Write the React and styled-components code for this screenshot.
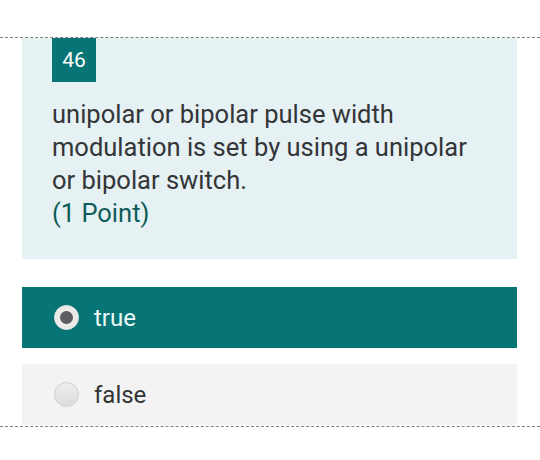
import React from 'react';
import styled, { createGlobalStyle } from 'styled-components';

const GlobalStyle = createGlobalStyle`
  body {
    margin: 0;
    background: #ffffff;
    font-family: Roboto, "Liberation Sans", sans-serif;
  }
`;

const Page = styled.div`
  width: 540px;
  height: 460px;
  padding-top: 37px;
  box-sizing: border-box;
`;

const Sheet = styled.div`
  border-top: 1px dashed #7d7d7d;
  border-bottom: 1px dashed #7d7d7d;
  padding: 0 23px 1px 22px;
  display: flex;
  flex-direction: column;
`;

const QuestionCard = styled.div`
  background: #e6f1f3;
  height: 221px;
  padding: 0 30px 0 30px;
  box-sizing: border-box;
`;

const Badge = styled.div`
  width: 44px;
  height: 44px;
  background: #077476;
  color: #ffffff;
  font-size: 21px;
  display: flex;
  align-items: center;
  justify-content: center;
`;

const Question = styled.div`
  margin-top: 16px;
  font-size: 25.5px;
  line-height: 33px;
  color: #333538;
`;

const Points = styled.div`
  color: #0d5c5a;
`;

const Options = styled.div`
  margin-top: 28px;
  display: flex;
  flex-direction: column;
  gap: 16px;
`;

const Option = styled.div`
  height: 61px;
  display: flex;
  align-items: center;
  padding-left: 32px;
  background: ${p => (p.$selected ? '#077476' : '#f3f3f3')};
  color: ${p => (p.$selected ? '#eef8f7' : '#333333')};
  font-size: 24px;
`;

const Radio = styled.span`
  width: 25px;
  height: 25px;
  border-radius: 50%;
  box-sizing: border-box;
  margin-right: 15px;
  flex-shrink: 0;
  display: flex;
  align-items: center;
  justify-content: center;
  background: ${p => (p.$checked ? '#ecebea' : 'linear-gradient(#ededed, #dcdcdc)')};
  border: 1px solid ${p => (p.$checked ? '#e4e4e4' : '#cfcfcf')};

  &::after {
    content: '';
    display: ${p => (p.$checked ? 'block' : 'none')};
    width: 13px;
    height: 13px;
    border-radius: 50%;
    background: #5c5c61;
  }
`;

export default function App() {
  return (
    <Page>
      <GlobalStyle />
      <Sheet>
        <QuestionCard>
          <Badge>46</Badge>
          <Question>
            unipolar or bipolar pulse width modulation is set by using a unipolar or bipolar switch.
            <Points>(1 Point)</Points>
          </Question>
        </QuestionCard>
        <Options>
          <Option $selected>
            <Radio $checked />
            true
          </Option>
          <Option>
            <Radio />
            false
          </Option>
        </Options>
      </Sheet>
    </Page>
  );
}
